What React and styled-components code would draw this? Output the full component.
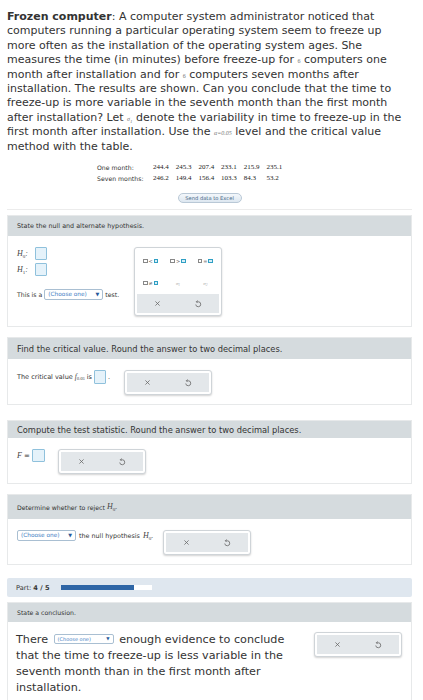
import React from "react";
import styled, { createGlobalStyle } from "styled-components";

const Global = createGlobalStyle`
  html, body { margin: 0; padding: 0; background: #fff; overflow: hidden; }
  body { font-family: "DejaVu Sans", Verdana, sans-serif; color: #333; }
  * { box-sizing: border-box; }
  sub { line-height: 0; vertical-align: -0.3em; }
`;

const Page = styled.div`
  padding: 10px 11px 0 7px;
  width: 423px;
`;

const Intro = styled.p`
  margin: 0;
  width: 416px;
  font-size: 11px;
  line-height: 14.4px;
  color: #333;
  white-space: nowrap;
`;

const Tiny = styled.span`
  font-family: "Liberation Serif", serif;
  font-size: ${(p) => p.$fs || 6}px;
  line-height: 0;
  color: #777;
  font-style: ${(p) => (p.$italic ? "italic" : "normal")};
`;

const DataGrid = styled.div`
  display: grid;
  grid-template-columns: 56px repeat(6, 22.7px);
  grid-auto-rows: 11px;
  align-items: center;
  margin: 8px 0 0 90px;
  line-height: 11px;
`;

const RowLabel = styled.span`
  font-size: 6.2px;
  color: #333;
`;

const Num = styled.span`
  font-family: "Liberation Serif", serif;
  font-size: 7px;
  color: #222;
`;

const ButtonRow = styled.div`
  display: flex;
  justify-content: center;
  margin-top: 9px;
`;

const ExcelButton = styled.span`
  display: inline-flex;
  align-items: center;
  justify-content: center;
  width: 64px;
  height: 10px;
  border: 1px solid #b9c8d6;
  border-radius: 6px;
  background: linear-gradient(#f3f7fb, #dde7f0);
  font-size: 5.2px;
  color: #4a6a8a;
`;

const Divider = styled.div`
  margin-top: 6px;
  border-top: 1px solid #ececec;
`;

const Card = styled.section`
  margin-top: ${(p) => p.$gap}px;
  border: 1px solid #e7e9ea;
  background: #fff;
`;

const CardHeader = styled.div`
  height: ${(p) => p.$h}px;
  background: #d5dbde;
  display: flex;
  align-items: center;
  padding-left: 9px;
  font-size: ${(p) => p.$fs}px;
  color: #333;
`;

const CardBody = styled.div`
  display: flex;
  align-items: flex-start;
  padding: ${(p) => p.$pad};
`;

const HypCol = styled.div`
  width: 117px;
  display: flex;
  flex-direction: column;
`;

const HypRow = styled.div`
  display: flex;
  align-items: center;
  margin-top: ${(p) => p.$mt || 0}px;
`;

const HLabel = styled.span`
  width: ${(p) => (p.$inline ? "auto" : "18px")};
  font-family: "Liberation Serif", serif;
  font-style: italic;
  font-size: 8px;
  line-height: 1;
  color: #444;
  sub { font-size: 5px; font-style: normal; }
`;

const AnswerBox = styled.span`
  display: inline-block;
  width: ${(p) => p.$w || 12}px;
  height: ${(p) => p.$h || 13}px;
  background: #e5f2fa;
  border: 1px solid #8fc1dc;
  border-radius: 1px;
  flex: none;
`;

const SmallText = styled.span`
  font-size: ${(p) => p.$fs || 6}px;
  color: #333;
  white-space: nowrap;
`;

const InlineRow = styled.div`
  display: flex;
  align-items: center;
  gap: ${(p) => p.$gap || 2}px;
`;

const Select = styled.span`
  display: inline-flex;
  align-items: center;
  justify-content: space-between;
  width: ${(p) => p.$w}px;
  height: ${(p) => p.$h}px;
  border: 1px solid #a9bfd2;
  border-radius: 2px;
  padding: 0 3px;
  font-size: ${(p) => p.$fs}px;
  line-height: 1;
  color: #3f80c4;
  background: #fff;
  flex: none;
  i { font-style: normal; color: #27589a; font-size: ${(p) => p.$fs * 0.85}px; }
`;

const MathF = styled.span`
  font-family: "Liberation Serif", serif;
  font-style: italic;
  font-size: ${(p) => p.$fs || 7}px;
  line-height: 1;
  color: #444;
  sub { font-size: 4.5px; font-style: italic; }
`;

const PaletteFrame = styled.div`
  width: 88px;
  margin-left: ${(p) => p.$ml || 0}px;
  border: 1px solid #cfd4d8;
  border-radius: 3px;
  box-shadow: 0 1px 2px rgba(0, 0, 0, 0.18);
  padding: 2px;
  background: #fff;
  flex: none;
`;

const SymbolGrid = styled.div`
  display: grid;
  grid-template-columns: repeat(3, 1fr);
  grid-auto-rows: 22px;
  align-items: center;
  justify-items: center;
`;

const Sym = styled.span`
  display: inline-flex;
  align-items: center;
  gap: 1px;
  font-size: 5px;
  color: #666;
`;

const Sq = styled.span`
  display: inline-block;
  width: 4.5px;
  height: 4.5px;
  border: ${(p) => (p.$hl ? "1.2px solid #2f9fc4" : "0.8px solid #888")};
  background: ${(p) => (p.$hl ? "#d8eef7" : "#fff")};
`;

const Sigma = styled.span`
  font-family: "Liberation Serif", serif;
  font-size: 5px;
  color: #aaa;
  font-style: italic;
  sub { font-size: 3.5px; }
`;

const ActionBar = styled.div`
  height: 19px;
  background: #e3e7ea;
  display: flex;
  align-items: center;
  justify-content: space-around;
`;

const PartBar = styled.div`
  margin-top: 13px;
  height: 19px;
  background: #dfe7ef;
  border-radius: 2px;
  display: flex;
  align-items: center;
  padding-left: 9px;
  font-size: 6.6px;
  color: #333;
  b { font-weight: bold; }
`;

const PartLabel = styled.span`
  width: 45px;
  flex: none;
  white-space: nowrap;
`;

const Progress = styled.div`
  width: 91px;
  height: 5px;
  background: #fff;
  display: flex;
  flex: none;
`;

const ProgressFill = styled.div`
  width: 80%;
  background: #2f66a6;
`;

const Conclusion = styled.div`
  width: 296px;
  font-size: 11.2px;
  line-height: 16px;
  color: #333;
  white-space: nowrap;
`;

const ConclusionSelect = styled(Select)`
  display: inline-flex;
  vertical-align: middle;
  margin: 0 2px;
  position: relative;
  top: -1px;
`;

const Times = () => (
  <svg width="7" height="7" viewBox="0 0 10 10">
    <path d="M2 2 L8 8 M8 2 L2 8" stroke="#666" strokeWidth="1.1" fill="none" />
  </svg>
);

const Undo = () => (
  <svg width="8" height="9" viewBox="0 0 16 17">
    <path d="M5 5 H8.5 A5 5 0 1 1 3.5 10.5" stroke="#666" strokeWidth="1.6" fill="none" />
    <path d="M7.2 2.4 L4.6 5 L7.2 7.6" stroke="#666" strokeWidth="1.6" fill="none" />
  </svg>
);

const Actions = () => (
  <ActionBar>
    <Times />
    <Undo />
  </ActionBar>
);

const Rel = ({ op }) => (
  <Sym>
    <Sq />
    {op}
    <Sq $hl />
  </Sym>
);

const Palette = ({ ml, full }) => (
  <PaletteFrame $ml={ml}>
    {full && (
      <SymbolGrid>
        <Rel op="<" />
        <Rel op=">" />
        <Rel op="=" />
        <Rel op="≠" />
        <Sigma>
          σ<sub>1</sub>
        </Sigma>
        <Sigma>
          σ<sub>2</sub>
        </Sigma>
      </SymbolGrid>
    )}
    <Actions />
  </PaletteFrame>
);

const oneMonth = ["244.4", "245.3", "207.4", "233.1", "215.9", "235.1"];
const sevenMonths = ["246.2", "149.4", "156.4", "103.3", "84.3", "53.2"];

export default function App() {
  return (
    <>
      <Global />
      <Page>
        <Intro>
          <b>Frozen computer</b>: A computer system administrator noticed that
          <br />
          computers running a particular operating system seem to freeze up
          <br />
          more often as the installation of the operating system ages. She
          <br />
          measures the time (in minutes) before freeze-up for <Tiny>6</Tiny> computers one
          <br />
          month after installation and for <Tiny>6</Tiny> computers seven months after
          <br />
          installation. The results are shown. Can you conclude that the time to
          <br />
          freeze-up is more variable in the seventh month than the first month
          <br />
          after installation? Let <Tiny $italic>σ<sub>1</sub></Tiny> denote the variability in time to freeze-up in the
          <br />
          first month after installation. Use the <Tiny $italic>α=0.05</Tiny> level and the critical value
          <br />
          method with the table.
        </Intro>

        <DataGrid>
          <RowLabel>One month:</RowLabel>
          {oneMonth.map((v, i) => (
            <Num key={"a" + i}>{v}</Num>
          ))}
          <RowLabel>Seven months:</RowLabel>
          {sevenMonths.map((v, i) => (
            <Num key={"b" + i}>{v}</Num>
          ))}
        </DataGrid>

        <ButtonRow>
          <ExcelButton>Send data to Excel</ExcelButton>
        </ButtonRow>
        <Divider />

        <Card $gap={5}>
          <CardHeader $h={20} $fs={6.4}>State the null and alternate hypothesis.</CardHeader>
          <CardBody $pad="11px 0 10px 9px">
            <HypCol>
              <HypRow>
                <HLabel>
                  H<sub>0</sub>:
                </HLabel>
                <AnswerBox />
              </HypRow>
              <HypRow $mt={3}>
                <HLabel>
                  H<sub>1</sub>:
                </HLabel>
                <AnswerBox />
              </HypRow>
              <HypRow $mt={13}>
                <InlineRow $gap={2}>
                  <SmallText $fs={6.2}>This is a</SmallText>
                  <Select $w={59} $h={11} $fs={5.8}>
                    (Choose one) <i>▼</i>
                  </Select>
                  <SmallText $fs={6.2}>test.</SmallText>
                </InlineRow>
              </HypRow>
            </HypCol>
            <Palette full />
          </CardBody>
        </Card>

        <Card $gap={10}>
          <CardHeader $h={21} $fs={8.3}>
            Find the critical value. Round the answer to two decimal places.
          </CardHeader>
          <CardBody $pad="11px 0 9px 9px">
            <InlineRow $gap={2}>
              <SmallText $fs={6.5}>The critical value</SmallText>
              <MathF $fs={7.5}>
                f<sub>0.05</sub>
              </MathF>
              <SmallText $fs={6.5}>is</SmallText>
              <AnswerBox $h={14} />
              <SmallText $fs={6.5}>.</SmallText>
            </InlineRow>
            <Palette ml={14} />
          </CardBody>
        </Card>

        <Card $gap={15}>
          <CardHeader $h={17} $fs={8.3}>
            Compute the test statistic. Round the answer to two decimal places.
          </CardHeader>
          <CardBody $pad="11px 0 9px 9px">
            <InlineRow $gap={2}>
              <MathF $fs={8}>F</MathF>
              <SmallText $fs={7}>=</SmallText>
              <AnswerBox $w={13} $h={13} />
            </InlineRow>
            <Palette ml={13} />
          </CardBody>
        </Card>

        <Card $gap={10}>
          <CardHeader $h={24} $fs={6.2}>
            <InlineRow $gap={2}>
              Determine whether to reject
              <HLabel $inline>
                H<sub>0</sub>.
              </HLabel>
            </InlineRow>
          </CardHeader>
          <CardBody $pad="11px 0 9px 9px">
            <InlineRow $gap={3}>
              <Select $w={59} $h={11} $fs={5.8}>
                (Choose one) <i>▼</i>
              </Select>
              <SmallText $fs={6.4}>the null hypothesis</SmallText>
              <HLabel $inline>
                H<sub>0</sub>.
              </HLabel>
            </InlineRow>
            <Palette ml={10} />
          </CardBody>
        </Card>

        <PartBar>
          <PartLabel>
            Part: <b>4 / 5</b>
          </PartLabel>
          <Progress>
            <ProgressFill />
          </Progress>
        </PartBar>

        <Card $gap={5}>
          <CardHeader $h={19} $fs={6.2}>State a conclusion.</CardHeader>
          <CardBody $pad="10px 0 12px 8px">
            <Conclusion>
              There{" "}
              <ConclusionSelect $w={60} $h={10} $fs={5}>
                (Choose one) <i>▼</i>
              </ConclusionSelect>{" "}
              enough evidence to conclude
              <br />
              that the time to freeze-up is less variable in the
              <br />
              seventh month than in the first month after
              <br />
              installation.
            </Conclusion>
            <Palette ml={2} />
          </CardBody>
        </Card>
      </Page>
    </>
  );
}
